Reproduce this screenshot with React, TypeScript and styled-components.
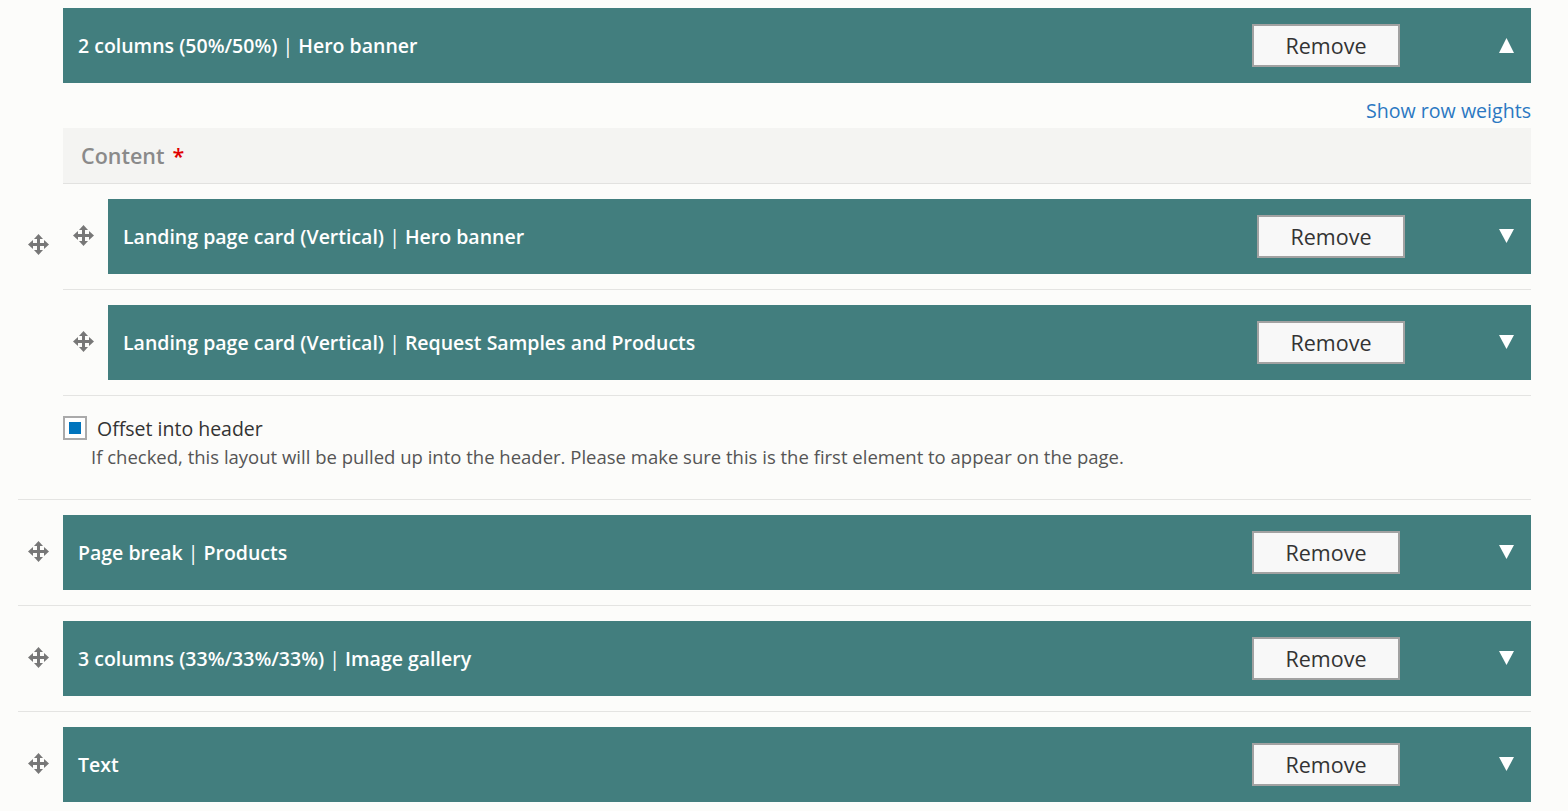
import React from 'react';
import styled, { createGlobalStyle } from 'styled-components';

const GlobalStyle = createGlobalStyle`
  html, body {
    margin: 0;
    padding: 0;
    background: #fcfcfa;
    font-family: 'Open Sans', 'Noto Sans', sans-serif;
    overflow: hidden;
  }
`;

const Page = styled.div`
  width: 1513px;
  margin: -7px 0 0 18px;
`;

const Row = styled.div`
  display: flex;
  align-items: center;
  padding: 15px 0;
  border-bottom: 1px solid #e4e4e2;
`;

const DragCell = styled.div`
  flex: none;
  width: 45px;
  display: flex;
  align-items: center;
  padding-left: 10px;
  box-sizing: border-box;
  margin-top: -3px;
`;

const RowBody = styled.div`
  flex: 1;
  min-width: 0;
`;

const Bar = styled.div`
  height: 75px;
  display: flex;
  align-items: center;
  background: #427e7e;
  padding-left: 15px;
  padding-right: 17px;
`;

const BarTitle = styled.div`
  flex: 1;
  color: #fff;
  font-size: 19.5px;
  font-weight: 600;
  white-space: pre;
`;

const Pipe = styled.span`
  font-weight: 400;
`;

const RemoveButton = styled.button<{ $nested?: boolean }>`
  width: 148px;
  height: 43px;
  box-sizing: border-box;
  border: 2px solid #a2a2a2;
  background: #f8f8f8;
  color: #333;
  font-family: 'Open Sans', 'Noto Sans', sans-serif;
  font-size: 21.5px;
  padding: 0;
  margin-right: ${(p) => (p.$nested ? '94px' : '99px')};
  cursor: pointer;
`;

const Arrow = styled.svg`
  display: block;
  width: 15px;
  height: 15px;
`;

const LinkRow = styled.div`
  display: flex;
  justify-content: flex-end;
  padding: 15px 0 4px;
  line-height: 26px;
`;

const WeightsLink = styled.a`
  color: #2b78c2;
  font-size: 19.6px;
  text-decoration: none;
`;

const ContentHeader = styled.div`
  height: 55px;
  display: flex;
  align-items: center;
  padding-left: 18px;
  background: #f4f4f2;
  border-bottom: 1px solid #e2e2e0;
  color: #8a8a8a;
  font-size: 21.5px;
  font-weight: 600;
`;

const Required = styled.span`
  color: #e00000;
  margin-left: 8px;
`;

const CheckboxField = styled.div`
  padding: 18px 0 14px;
`;

const CheckLabel = styled.label`
  display: flex;
  align-items: center;
  height: 28px;
  color: #333;
  font-size: 19.5px;
`;

const Box = styled.span`
  flex: none;
  width: 24px;
  height: 24px;
  box-sizing: border-box;
  border: 2px solid #aaa;
  background: #fff;
  display: flex;
  align-items: center;
  justify-content: center;
  margin-right: 10px;
`;

const BoxFill = styled.span`
  width: 12px;
  height: 12px;
  background: #0074bd;
`;

const Description = styled.div`
  margin: 2px 0 0 28px;
  line-height: 26px;
  color: #555;
  font-size: 18.5px;
`;

const DragHandle = () => (
  <svg width="21" height="21" viewBox="0 0 21 21" fill="#777">
    <rect x="9" y="4" width="3" height="13" />
    <rect x="4" y="9" width="13" height="3" />
    <polygon points="10.5,0 15,5 6,5" />
    <polygon points="10.5,21 15,16 6,16" />
    <polygon points="0,10.5 5,6 5,15" />
    <polygon points="21,10.5 16,6 16,15" />
  </svg>
);

const Toggle = ({ open }: { open?: boolean }) => (
  <Arrow viewBox="0 0 15 15">
    {open ? (
      <polygon points="7.5,0 15,15 0,15" fill="#fff" />
    ) : (
      <polygon points="0,0 15,0 7.5,14" fill="#fff" />
    )}
  </Arrow>
);

const ItemBar = ({
  type,
  label,
  open,
  nested,
}: {
  type: string;
  label?: string;
  open?: boolean;
  nested?: boolean;
}) => (
  <Bar>
    <BarTitle>
      {type}
      {label && (
        <>
          <Pipe> | </Pipe>
          {label}
        </>
      )}
    </BarTitle>
    <RemoveButton $nested={nested}>Remove</RemoveButton>
    <Toggle open={open} />
  </Bar>
);

const nestedItems = ['Hero banner', 'Request Samples and Products'];

const items = [
  { type: 'Page break', label: 'Products' },
  { type: '3 columns (33%/33%/33%)', label: 'Image gallery' },
  { type: 'Text' },
];

export default function App() {
  return (
    <>
      <GlobalStyle />
      <Page>
        <Row>
          <DragCell>
            <DragHandle />
          </DragCell>
          <RowBody>
            <ItemBar type="2 columns (50%/50%)" label="Hero banner" open />
            <LinkRow>
              <WeightsLink href="#">Show row weights</WeightsLink>
            </LinkRow>
            <ContentHeader>
              Content<Required>*</Required>
            </ContentHeader>
            {nestedItems.map((label) => (
              <Row key={label}>
                <DragCell>
                  <DragHandle />
                </DragCell>
                <RowBody>
                  <ItemBar type="Landing page card (Vertical)" label={label} nested />
                </RowBody>
              </Row>
            ))}
            <CheckboxField>
              <CheckLabel>
                <Box>
                  <BoxFill />
                </Box>
                Offset into header
              </CheckLabel>
              <Description>
                If checked, this layout will be pulled up into the header. Please make sure this is the first element to appear on the page.
              </Description>
            </CheckboxField>
          </RowBody>
        </Row>
        {items.map((item) => (
          <Row key={item.type}>
            <DragCell>
              <DragHandle />
            </DragCell>
            <RowBody>
              <ItemBar type={item.type} label={item.label} />
            </RowBody>
          </Row>
        ))}
      </Page>
    </>
  );
}
